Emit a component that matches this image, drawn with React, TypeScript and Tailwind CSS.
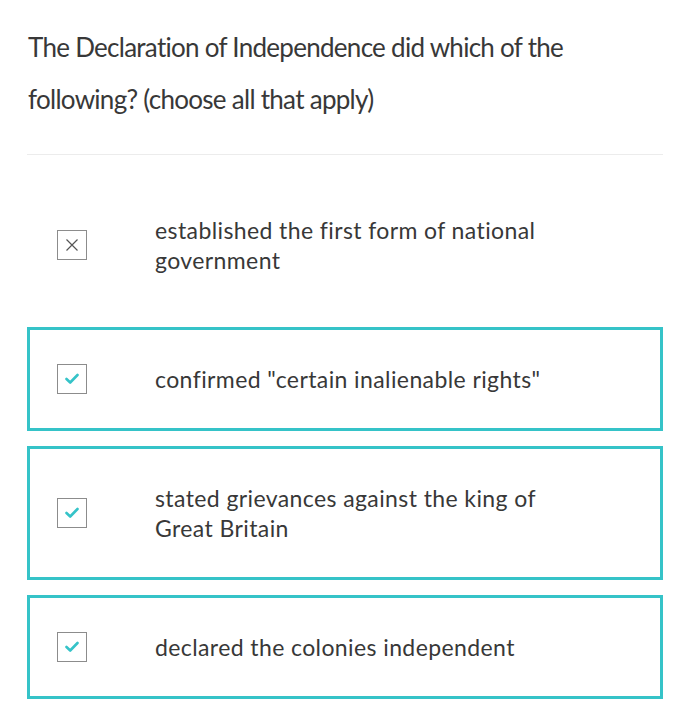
import React from "react";

type Option = { id: number; text: string[]; selected: boolean };

const options: Option[] = [
  { id: 1, text: ["established the first form of national", "government"], selected: false },
  { id: 2, text: ['confirmed "certain inalienable rights"'], selected: true },
  { id: 3, text: ["stated grievances against the king of", "Great Britain"], selected: true },
  { id: 4, text: ["declared the colonies independent"], selected: true },
];

function CheckMark() {
  return (
    <svg width="14" height="12" viewBox="0 0 14 12" fill="none">
      <polyline points="1.5,6 5.2,9.5 12.5,2" stroke="#35c3c8" strokeWidth="2.6" strokeLinecap="round" strokeLinejoin="round" />
    </svg>
  );
}

function CrossMark() {
  return (
    <svg width="14" height="14" viewBox="0 0 14 14" fill="none">
      <path d="M1.5 1.5 L12.5 12.5 M12.5 1.5 L1.5 12.5" stroke="#555" strokeWidth="1.2" />
    </svg>
  );
}

export default function App() {
  return (
    <div className="w-[678px] h-[709px] bg-white overflow-hidden font-['Lato','Liberation_Sans',sans-serif]">
      <div className="pl-[28px] pr-[15px] pt-[21px]">
        <h1 className="text-[26px] leading-[52px] tracking-[-0.72px] text-[#383838] font-normal">
          The Declaration of Independence did which of the
          <br />
          following? (choose all that apply)
        </h1>
      </div>
      <div className="ml-[27px] mr-[15px] mt-[29px] h-px bg-[#ececec]" />

      <div className="ml-[27px] mr-[15px] mt-[23px] flex flex-col gap-[15px]">
        {options.map((o) => (
          <div
            key={o.id}
            className={`flex items-center border-[3px] pl-[27px] py-[34px] ${
              o.selected ? "border-[#35c3c8]" : "border-transparent"
            }`}
          >
            <div className="w-[30px] h-[30px] border border-[#8c8c8c] flex items-center justify-center shrink-0">
              {o.selected ? <CheckMark /> : <CrossMark />}
            </div>
            <div className="ml-[68px] text-[23px] leading-[30px] tracking-[0.4px] text-[#383838]">
              {o.text.map((t, i) => (
                <div key={i}>{t}</div>
              ))}
            </div>
          </div>
        ))}
      </div>
    </div>
  );
}
